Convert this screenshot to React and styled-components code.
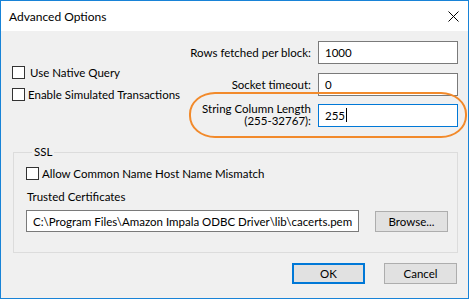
import React from 'react';
import styled, { createGlobalStyle } from 'styled-components';

const GlobalStyle = createGlobalStyle`
  html, body {
    margin: 0;
    padding: 0;
    background: #ffffff;
  }
  body {
    font-family: Lato, "Liberation Sans", Arial, sans-serif;
    font-size: 11.5px;
    color: #000;
  }
`;

const Window = styled.div`
  width: 469px;
  height: 299px;
  box-sizing: border-box;
  border: 1px solid #1883d7;
  display: flex;
  flex-direction: column;
  background: #f0f0f0;
`;

const TitleBar = styled.div`
  height: 30px;
  background: #ffffff;
  display: flex;
  align-items: center;
  justify-content: space-between;
  padding: 0 9px 0 8px;
  font-size: 12px;
`;

const Title = styled.span``;

const CloseIcon = styled.svg`
  width: 11px;
  height: 11px;
`;

const Body = styled.div`
  flex: 1;
  display: flex;
  flex-direction: column;
  padding: 10px 10px 0 11px;
`;

const TopSection = styled.div`
  display: flex;
  justify-content: space-between;
`;

const LeftCol = styled.div`
  display: flex;
  flex-direction: column;
  gap: 9px;
  padding-top: 25px;
  min-width: 0;
`;

const CheckRow = styled.label`
  display: flex;
  align-items: center;
  gap: ${({ $gap }) => $gap || 5}px;
  height: 13px;
  white-space: nowrap;
`;

const Box = styled.span`
  width: 13px;
  height: 13px;
  box-sizing: border-box;
  border: 1px solid #333333;
  background: #ffffff;
  flex: none;
`;

const RightCol = styled.div`
  display: flex;
  flex-direction: column;
  flex: none;
`;

const FieldRow = styled.div`
  position: relative;
  display: flex;
  align-items: center;
  justify-content: flex-end;
  gap: 7px;
  margin-top: ${({ $top }) => $top || 0}px;
`;

const FieldLabel = styled.span`
  text-align: right;
  line-height: 12px;
  white-space: nowrap;
`;

const TextBox = styled.div`
  width: ${({ $w }) => $w || 140}px;
  height: ${({ $h }) => $h || 23}px;
  box-sizing: border-box;
  border: 1px solid ${({ $focus }) => ($focus ? '#0078d7' : '#7a7a7a')};
  background: #ffffff;
  display: flex;
  align-items: center;
  padding-left: 6px;
  white-space: nowrap;
  overflow: hidden;
  flex: none;
`;

const Caret = styled.span`
  display: inline-block;
  width: 1px;
  height: 14px;
  background: #000;
  margin-left: 1px;
`;

const Highlight = styled.div`
  position: absolute;
  left: -1px;
  right: -9px;
  top: -11px;
  bottom: -11px;
  border: 2px solid #f28a2b;
  border-radius: 26px / 22px;
  pointer-events: none;
`;

const GroupBox = styled.fieldset`
  margin: 18px 0 0 1px;
  padding: 0 0 0 12px;
  border: 1px solid #dcdcdc;
  height: 108px;
  box-sizing: border-box;
  min-width: 0;
`;

const Legend = styled.legend`
  margin-left: 6px;
  padding: 0 2px;
  line-height: 14px;
`;

const GroupContent = styled.div`
  display: flex;
  flex-direction: column;
  padding-top: 8px;
`;

const CaptionLabel = styled.div`
  margin: 10px 0 0 1px;
  line-height: 14px;
`;

const PathRow = styled.div`
  display: flex;
  align-items: center;
  gap: 16px;
  margin-top: 6px;
`;

const Button = styled.button`
  width: ${({ $w }) => $w || 73}px;
  height: 21px;
  box-sizing: border-box;
  font-family: inherit;
  font-size: 11.5px;
  color: #000;
  background: #e1e1e1;
  border: ${({ $default }) => ($default ? '2px solid #0078d7' : '1px solid #adadad')};
  padding: 0;
  flex: none;
`;

const Footer = styled.div`
  display: flex;
  justify-content: flex-end;
  gap: 19px;
  margin-top: 10px;
  padding-right: 1px;
`;

const App = () => {
  return (
    <>
      <GlobalStyle />
      <Window>
        <TitleBar>
          <Title>Advanced Options</Title>
          <CloseIcon viewBox="0 0 11 11">
            <path d="M0.5 0.5 L10.5 10.5 M10.5 0.5 L0.5 10.5" stroke="#000" strokeWidth="1" fill="none" />
          </CloseIcon>
        </TitleBar>
        <Body>
          <TopSection>
            <LeftCol>
              <CheckRow $gap={5}>
                <Box />
                Use Native Query
              </CheckRow>
              <CheckRow $gap={3}>
                <Box />
                Enable Simulated Transactions
              </CheckRow>
            </LeftCol>
            <RightCol>
              <FieldRow>
                <FieldLabel>Rows fetched per block:</FieldLabel>
                <TextBox>1000</TextBox>
              </FieldRow>
              <FieldRow $top={9}>
                <FieldLabel>Socket timeout:</FieldLabel>
                <TextBox>0</TextBox>
              </FieldRow>
              <FieldRow $top={7}>
                <FieldLabel>
                  String Column Length
                  <br />
                  (255-32767):
                </FieldLabel>
                <TextBox $focus>
                  255
                  <Caret />
                </TextBox>
                <Highlight />
              </FieldRow>
            </RightCol>
          </TopSection>
          <GroupBox>
            <Legend>SSL</Legend>
            <GroupContent>
              <CheckRow $gap={3}>
                <Box />
                Allow Common Name Host Name Mismatch
              </CheckRow>
              <CaptionLabel>Trusted Certificates</CaptionLabel>
              <PathRow>
                <TextBox $w={333} $h={22}>C:\Program Files\Amazon Impala ODBC Driver\lib\cacerts.pem</TextBox>
                <Button>Browse...</Button>
              </PathRow>
            </GroupContent>
          </GroupBox>
          <Footer>
            <Button $default>OK</Button>
            <Button>Cancel</Button>
          </Footer>
        </Body>
      </Window>
    </>
  );
};

export default App;
